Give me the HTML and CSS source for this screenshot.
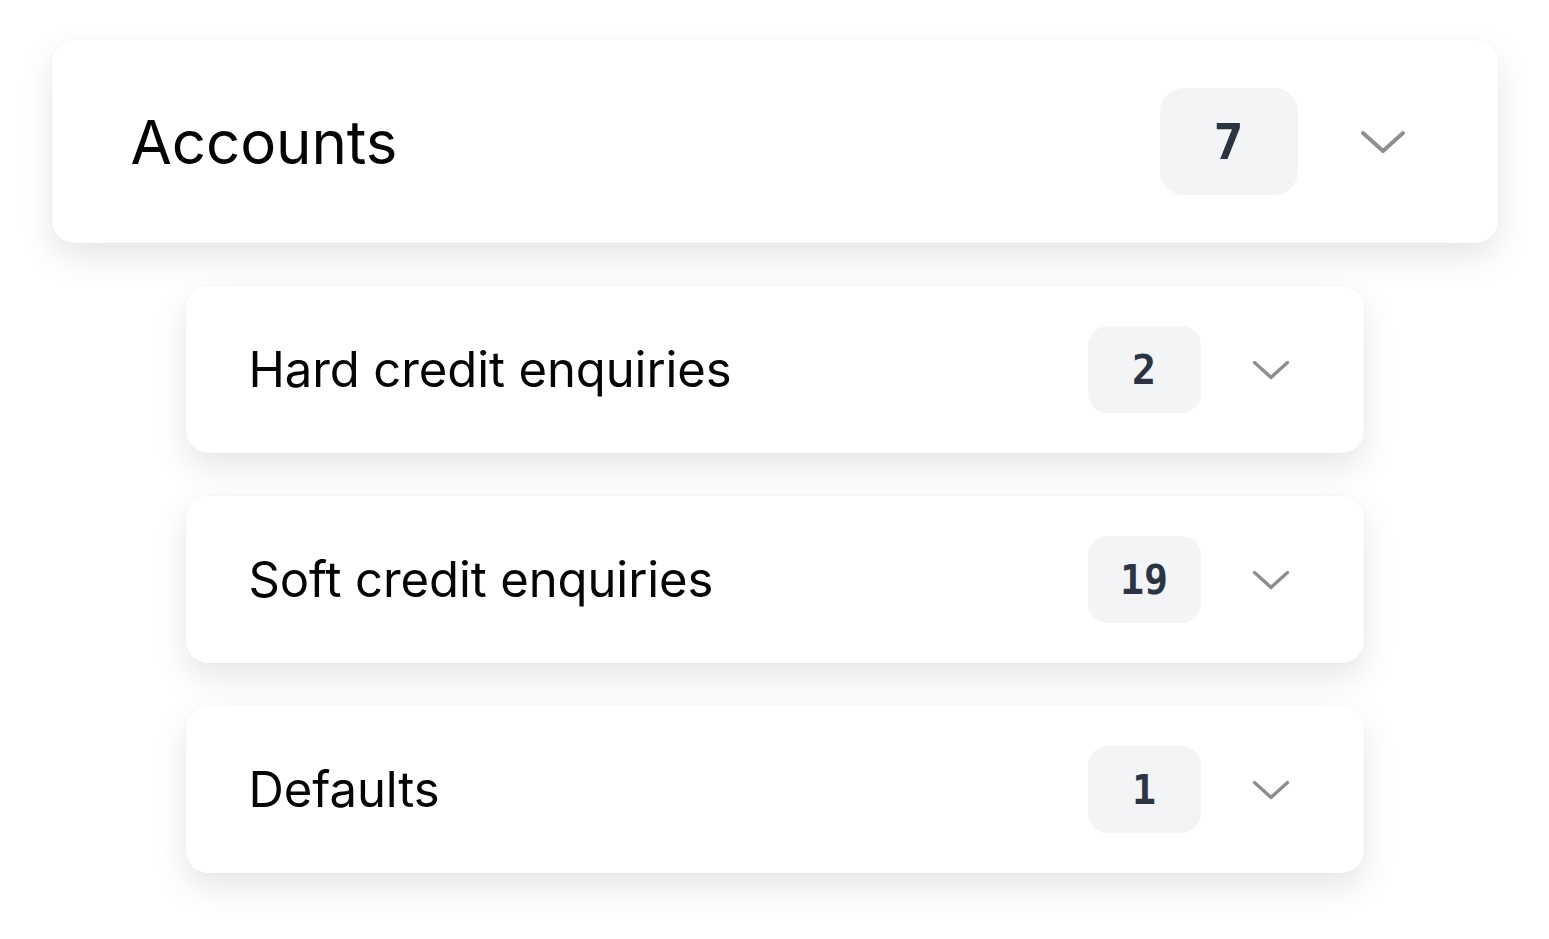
FILE: index.html
```html
<!DOCTYPE html>
<html lang="en">
<head>
  <meta charset="UTF-8">
  <title>Credit report sections</title>
  <meta name="viewport" content="width=device-width, initial-scale=1.0">
  <link rel="stylesheet" href="styles.css">
</head>
<body>
  <div class="report">
    <!-- Top level section -->
    <div class="section section-main">
      <span class="section-title">Accounts</span>
      <span class="count">7</span>
      <svg class="chevron" viewBox="0 0 46 26" aria-hidden="true">
        <path d="M3 4 L23 22 L43 4"/>
      </svg>
    </div>

    <!-- Sub sections -->
    <div class="section section-sub">
      <span class="section-title">Hard credit enquiries</span>
      <span class="count">2</span>
      <svg class="chevron" viewBox="0 0 46 26" aria-hidden="true">
        <path d="M3 4 L23 22 L43 4"/>
      </svg>
    </div>
    <div class="section section-sub">
      <span class="section-title">Soft credit enquiries</span>
      <span class="count">19</span>
      <svg class="chevron" viewBox="0 0 46 26" aria-hidden="true">
        <path d="M3 4 L23 22 L43 4"/>
      </svg>
    </div>
    <div class="section section-sub">
      <span class="section-title">Defaults</span>
      <span class="count">1</span>
      <svg class="chevron" viewBox="0 0 46 26" aria-hidden="true">
        <path d="M3 4 L23 22 L43 4"/>
      </svg>
    </div>
  </div>
</body>
</html>
```

FILE: styles.css
```css
body {
  margin: 0;
  padding: 0;
  font-family: Inter, "Noto Sans", sans-serif;
  color: #050505;
  background-color: #fff;
}

/* Column of collapsible sections */
.report {
  display: flex;
  flex-direction: column;
  align-items: center;
  gap: 43px;
  padding: 40px 0 66px;
}

.section {
  display: flex;
  align-items: center;
  box-sizing: border-box;
  background: #fff;
  border-radius: 22px;
  box-shadow:
    0 0 0 1px rgba(0, 0, 0, 0.015),
    0 14px 34px rgba(0, 0, 0, 0.1);
}

.section-title {
  flex: 1;
  letter-spacing: -0.1px;
}

/* Count pill */
.count {
  display: flex;
  align-items: center;
  justify-content: center;
  background: #f2f4f6;
  color: #2b3443;
  font-family: "DejaVu Sans Mono", "Liberation Mono", monospace;
  font-weight: bold;
}

.chevron {
  fill: none;
  stroke: #8e8e8e;
  stroke-width: 4;
  stroke-linecap: round;
  stroke-linejoin: round;
}

/* Accounts card */
.section-main {
  width: 1446px;
  height: 203px;
  padding: 0 92px 0 79px;
}
.section-main .section-title {
  font-size: 60px;
}
.section-main .count {
  width: 138px;
  height: 107px;
  border-radius: 24px;
  font-size: 50px;
  margin-right: 62px;
}
.section-main .chevron {
  width: 46px;
  height: 26px;
}

/* Nested cards */
.section-sub {
  width: 1178px;
  height: 167px;
  padding: 0 74px 0 63px;
}
.section-sub .section-title {
  font-size: 49px;
}
.section-sub .count {
  width: 113px;
  height: 87px;
  border-radius: 20px;
  font-size: 40px;
  margin-right: 51px;
}
.section-sub .chevron {
  width: 38px;
  height: 22px;
}
```
